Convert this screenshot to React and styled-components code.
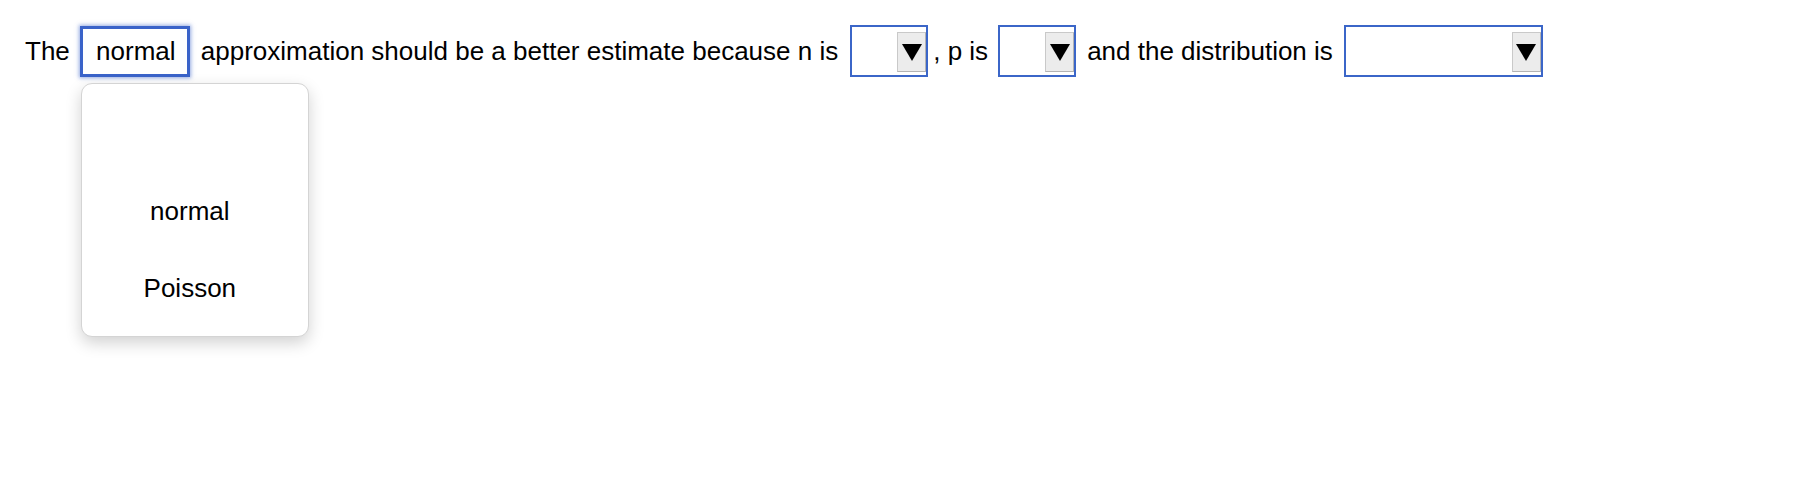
import React from "react";
import styled, { createGlobalStyle } from "styled-components";

const GlobalStyle = createGlobalStyle`
  html, body {
    margin: 0;
    padding: 0;
    background: #ffffff;
  }
  body {
    font-family: "Liberation Sans", Arial, Helvetica, sans-serif;
    font-size: 26px;
    color: #000000;
  }
`;

const Page = styled.div`
  width: 1802px;
  height: 482px;
  padding: 25px 0 0 25px;
  box-sizing: border-box;
`;

const Sentence = styled.div`
  display: flex;
  align-items: center;
  height: 52px;
`;

const Words = styled.span`
  white-space: pre;
  line-height: normal;
`;

const Combo = styled.div`
  position: relative;
  margin: 0 ${({ after }) => (after !== undefined ? after : 11)}px 0 ${({ before }) => (before !== undefined ? before : 11)}px;
`;

const TextBox = styled.div`
  box-sizing: border-box;
  width: 110px;
  height: 51px;
  border: 3px solid #3a63c9;
  box-shadow: 0 0 4px 1px rgba(58, 99, 201, 0.55);
  display: flex;
  align-items: center;
  justify-content: center;
  padding-left: 2px;
`;

const SelectBox = styled.div`
  box-sizing: border-box;
  width: ${({ width }) => width}px;
  height: 52px;
  border: 2px solid #3b66c8;
  display: flex;
  align-items: center;
  justify-content: flex-end;
`;

const ArrowButton = styled.div`
  box-sizing: border-box;
  width: 29px;
  height: 40px;
  margin-top: 1px;
  background: #ececec;
  border: 1px solid #c9c9c9;
  border-right-color: #b3b3b3;
  border-bottom-color: #b3b3b3;
  display: flex;
  align-items: center;
  justify-content: center;
`;

const Triangle = styled.div`
  width: 0;
  height: 0;
  border-left: 10px solid transparent;
  border-right: 10px solid transparent;
  border-top: 17px solid #000000;
  margin-top: 1px;
`;

const Menu = styled.ul`
  position: absolute;
  top: 57px;
  left: 1px;
  box-sizing: border-box;
  width: 228px;
  height: 254px;
  margin: 0;
  padding: 12px 10px 10px 0;
  list-style: none;
  background: #ffffff;
  border: 1px solid #d4d4d4;
  border-radius: 11px;
  box-shadow: 0 6px 16px rgba(0, 0, 0, 0.18);
  z-index: 10;
`;

const Option = styled.li`
  height: 77px;
  display: flex;
  align-items: center;
  justify-content: center;
  line-height: normal;
`;

function Dropdown({ width, before, after }) {
  return (
    <Combo before={before} after={after}>
      <SelectBox width={width}>
        <ArrowButton>
          <Triangle />
        </ArrowButton>
      </SelectBox>
    </Combo>
  );
}

export default function App() {
  return (
    <>
      <GlobalStyle />
      <Page>
        <Sentence>
          <Words>The</Words>
          <Combo before={10}>
            <TextBox>normal</TextBox>
            <Menu>
              <Option>{"\u00a0"}</Option>
              <Option>normal</Option>
              <Option>Poisson</Option>
            </Menu>
          </Combo>
          <Words>approximation should be a better estimate because n is</Words>
          <Dropdown width={78} before={12} after={5} />
          <Words>, p is</Words>
          <Dropdown width={78} before={10} />
          <Words>and the distribution is</Words>
          <Dropdown width={199} />
        </Sentence>
      </Page>
    </>
  );
}
